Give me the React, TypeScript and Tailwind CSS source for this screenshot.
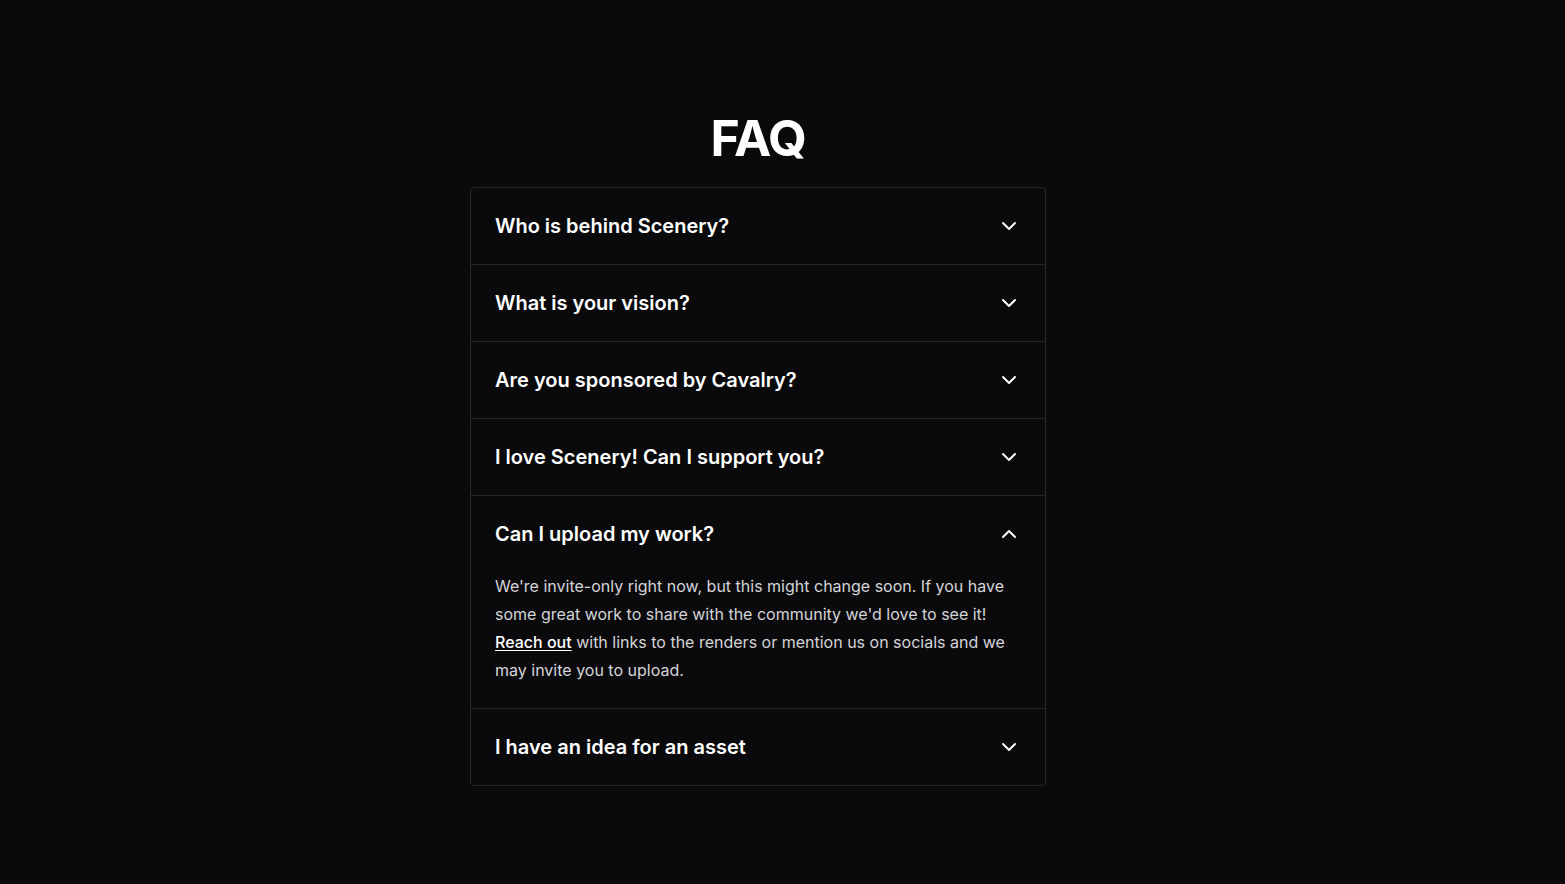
import { useState } from "react";
import { ChevronDown, ChevronUp } from "lucide-react";

const faqs = [
  { q: "Who is behind Scenery?" },
  { q: "What is your vision?" },
  { q: "Are you sponsored by Cavalry?" },
  { q: "I love Scenery! Can I support you?" },
  { q: "Can I upload my work?" },
  { q: "I have an idea for an asset" },
];

export default function App() {
  const [openIdx, setOpenIdx] = useState<number | null>(4);

  return (
    <div
      className="min-h-screen bg-[#0a0a0c] pr-[49px] text-white"
      style={{ fontFamily: "Inter, 'Noto Sans', sans-serif" }}
    >
      <div className="mx-auto flex w-[576px] flex-col items-center pt-[113px]">
        <h1 className="mb-6 text-[50px] font-bold leading-[50px] tracking-tight">FAQ</h1>
        <div className="w-full rounded border border-[#27272a]">
          {faqs.map((f, i) => {
            const open = openIdx === i;
            return (
              <div key={f.q} className={i > 0 ? "border-t border-[#27272a]" : ""}>
                <button
                  onClick={() => setOpenIdx(open ? null : i)}
                  className="flex h-[76px] w-full items-center justify-between px-6 text-left"
                >
                  <span className="text-[20px] font-semibold">{f.q}</span>
                  {open ? (
                    <ChevronUp className="h-6 w-6" strokeWidth={2} />
                  ) : (
                    <ChevronDown className="h-6 w-6" strokeWidth={2} />
                  )}
                </button>
                {open && (
                  <div className="px-6 pb-6 text-base leading-7 text-[#d4d4d8]">
                    We're invite-only right now, but this might change soon. If you have
                    some great work to share with the community we'd love to see it!{" "}
                    <a href="#" className="font-medium text-white underline underline-offset-2">
                      Reach out
                    </a>{" "}
                    with links to the renders or mention us on socials and we may invite
                    you to upload.
                  </div>
                )}
              </div>
            );
          })}
        </div>
      </div>
    </div>
  );
}
